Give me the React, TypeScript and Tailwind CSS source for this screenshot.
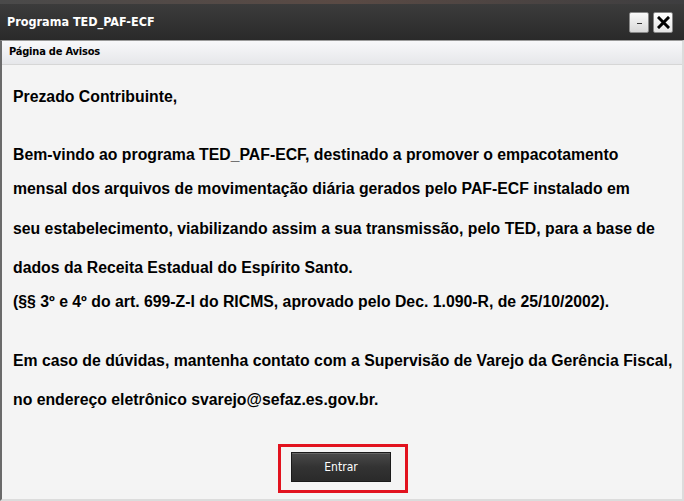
export default function App() {
  const body = "font-['Liberation_Sans',Arial,sans-serif] font-bold text-[15.8px] leading-[20px] text-black";
  return (
    <div className="w-[684px] h-[501px] overflow-hidden bg-[#2d2d2d] flex flex-col">
      <div className="h-[4px] bg-gradient-to-r from-[#4a4a4a] via-[#5a4a44] to-[#3e3e40]" />
      <div className="h-[36px] flex items-center justify-between pl-[7px] pr-[11px] bg-gradient-to-b from-[#3c3c3c] to-[#2a2a2a]">
        <span className="font-['DejaVu_Sans_Condensed','DejaVu_Sans',sans-serif] font-bold text-[12.5px] text-white">
          Programa TED_PAF-ECF
        </span>
        <div className="flex gap-[4px]">
          <button className="w-[20px] h-[21px] rounded-[2px] border border-[#888] bg-gradient-to-b from-[#fafafa] to-[#d8d8d8] flex items-center justify-center">
            <span className="block w-[5px] h-[1px] bg-[#333] mt-[2px]" />
          </button>
          <button className="w-[20px] h-[21px] rounded-[2px] border border-[#888] bg-gradient-to-b from-[#ffffff] to-[#e4e4e4] flex items-center justify-center">
            <svg width="13" height="13" viewBox="0 0 13 13">
              <path d="M2 2 L11 11 M11 2 L2 11" stroke="#000" strokeWidth="3" strokeLinecap="square" />
            </svg>
          </button>
        </div>
      </div>
      <div className="flex-1 flex flex-col bg-[#f4f4f4] border-l-[2px] border-l-[#6a6a6a] border-r-[2px] border-r-[#dcdcdc] border-t border-t-[#9a9a9a] border-b-[2px] border-b-[#dcdcdc]">
        <div className="h-[24px] flex items-center pl-[7px] bg-gradient-to-b from-[#f8f8fa] to-[#e6e7ea] border-b border-[#d6d6d6]">
          <span className="font-['DejaVu_Sans_Condensed','DejaVu_Sans',sans-serif] font-bold text-[11px] tracking-[-0.2px] text-black">
            Página de Avisos
          </span>
        </div>
        <div className={`${body} pl-[11px] pt-[22px]`}>
          <p>Prezado Contribuinte,</p>
          <p className="mt-[38px]">Bem-vindo ao programa TED_PAF-ECF, destinado a promover o empacotamento</p>
          <p className="mt-[14px]">mensal dos arquivos de movimentação diária gerados pelo PAF-ECF instalado em</p>
          <p className="mt-[20px]">seu estabelecimento, viabilizando assim a sua transmissão, pelo TED, para a base de</p>
          <p className="mt-[19px]">dados da Receita Estadual do Espírito Santo.</p>
          <p className="mt-[14px]">(§§ 3º e 4º do art. 699-Z-I do RICMS, aprovado pelo Dec. 1.090-R, de 25/10/2002).</p>
          <p className="mt-[39px]">Em caso de dúvidas, mantenha contato com a Supervisão de Varejo da Gerência Fiscal,</p>
          <p className="mt-[19px]">no endereço eletrônico svarejo@sefaz.es.gov.br.</p>
        </div>
        <div className="flex justify-center mt-auto mb-[6px] pl-[2px]">
          <div className="border-[3px] border-[#e2121e] pl-[10px] pr-[14px] pt-[5px] pb-[8px]">
            <button className="w-[100px] h-[30px] border border-[#1a1a1a] bg-gradient-to-b from-[#4a4a4a] via-[#333] to-[#2a2a2a] text-white text-[12px] font-['DejaVu_Sans_Condensed','DejaVu_Sans',sans-serif] shadow-[inset_0_1px_0_#666]">
              Entrar
            </button>
          </div>
        </div>
      </div>
    </div>
  );
}
